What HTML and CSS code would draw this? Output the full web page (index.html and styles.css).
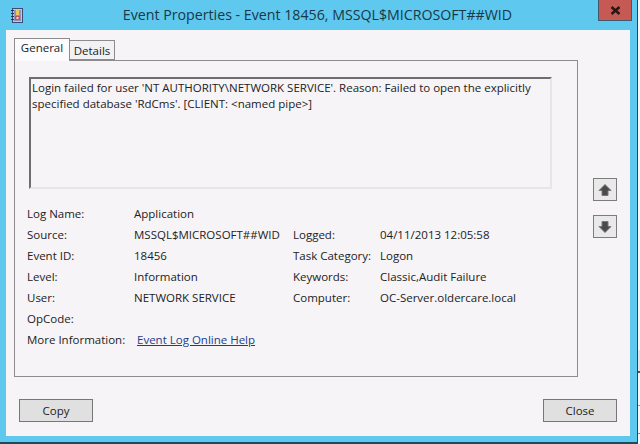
FILE: index.html
```html
<!DOCTYPE html>
<html lang="en">
<head>
<meta charset="utf-8">
<title>Event Properties</title>
<link rel="stylesheet" href="styles.css">
</head>
<body>
<div class="window">
  <header class="titlebar">
    <svg class="app-icon" width="14" height="17" viewBox="0 0 14 17">
      <rect x="2.500" y="1.500" width="10" height="14" fill="#c9c3dc" stroke="#3d4a78"/>
      <rect x="4" y="3" width="7" height="11" fill="#8f93b8"/>
      <rect x="6" y="3" width="3" height="5" fill="#e8c860"/>
      <rect x="5" y="9" width="5" height="4" fill="#c8505a"/>
      <rect x="6.500" y="10" width="2" height="2" fill="#efe0d8"/>
      <path d="M1 3.500h3M1 6.500h3M1 9.500h3M1 12.500h3" stroke="#2b3350"/>
    </svg>
    <h1 class="title">Event Properties - Event 18456, MSSQL$MICROSOFT##WID</h1>
    <div class="close"><svg width="11" height="9" viewBox="0 0 11 9"><path d="M1.500 1l8 7M9.500 1l-8 7" stroke="#2a1512" stroke-width="2.400"/></svg></div>
  </header>
  <main class="client">
    <div class="upper">
      <section class="tabs-area">
        <nav class="tabs">
          <div class="tab active">General</div>
          <div class="tab">Details</div>
        </nav>
        <div class="panel">
          <div class="message">Login failed for user 'NT AUTHORITY\NETWORK SERVICE'. Reason: Failed to open the explicitly specified database 'RdCms'. [CLIENT: &lt;named pipe&gt;]</div>
          <div class="props">
            <span>Log Name:</span><span class="wide">Application</span>
            <span>Source:</span><span>MSSQL$MICROSOFT##WID</span><span>Logged:</span><span>04/11/2013 12:05:58</span>
            <span>Event ID:</span><span>18456</span><span>Task Category:</span><span>Logon</span>
            <span>Level:</span><span>Information</span><span>Keywords:</span><span>Classic,Audit Failure</span>
            <span>User:</span><span>NETWORK SERVICE</span><span>Computer:</span><span>OC-Server.oldercare.local</span>
            <span>OpCode:</span><span class="wide"></span>
            <span>More Information:</span><a class="wide link" href="#">Event Log Online Help</a>
          </div>
        </div>
      </section>
      <aside class="arrows">
        <button class="arrow"><svg width="14" height="14" viewBox="0 0 14 14"><path d="M7 1.500L13 7.500H10V12.500H4V7.500H1Z" fill="#4a4a4c" stroke="#777" stroke-width="1"/></svg></button>
        <button class="arrow"><svg width="14" height="14" viewBox="0 0 14 14"><path d="M7 12.500L13 6.500H10V1.500H4V6.500H1Z" fill="#4a4a4c" stroke="#777" stroke-width="1"/></svg></button>
      </aside>
    </div>
    <footer class="actions">
      <button class="btn">Copy</button>
      <button class="btn">Close</button>
    </footer>
  </main>
</div>
<div class="backdrop"></div>
</body>
</html>
```
FILE: styles.css
```css
* { box-sizing: border-box; }
html, body { margin: 0; padding: 0; }
body { width: 640px; height: 444px; display: flex; background: #f4f8fa; overflow: hidden; font-family: "Open Sans", "Noto Sans", sans-serif; font-size: 11.5px; color: #222; }
.window { width: 638px; height: 444px; flex: none; background: #5fc8ee; display: flex; flex-direction: column; padding: 0 7px 6px 6px; border-right: 1px solid #1f4a5c; border-bottom: 2px solid #1f4a5c; }
.titlebar { height: 30px; flex: none; display: flex; align-items: center; position: relative; }
.app-icon { position: absolute; left: 4px; top: 7px; }
.title { margin: 0 0 2px; width: 100%; text-align: center; font-size: 14.2px; font-weight: 400; color: #17384a; padding-right: 1px; }
.close { position: absolute; right: -2px; top: 0; width: 34px; height: 21px; background: #c55a55; border: 1px solid #3f5a6a; border-top: 0; display: flex; align-items: center; justify-content: center; }
.client { flex: 1; background: #f6f4f7; display: flex; flex-direction: column; padding: 8px 13px 0 8px; }
.upper { display: flex; flex: none; }
.tabs-area { width: 564px; }
.tabs { display: flex; align-items: flex-end; height: 23px; position: relative; z-index: 1; }
.tab { width: 45px; height: 20px; border: 1px solid #8c8c8c; border-left: 0; background: #f2f1f3; text-align: center; line-height: 19px; margin-bottom: 1px; }
.tab.active { width: 56px; height: 23px; border-left: 1px solid #8c8c8c; border-bottom: 0; background: #fcfbfd; line-height: 18px; margin-bottom: 0; }
.panel { height: 317px; margin-top: -1px; border: 1px solid #8c8c8c; background: #f6f4f7; padding: 16px 25px 0 14px; }
.message { height: 112px; border: 2px solid #e6e5e8; border-top-color: #6e6e6e; border-left-color: #6e6e6e; padding: 1px 0 0 1px; line-height: 16px; }
.props { display: grid; grid-template-columns: 107px 159px 87px 1fr; grid-auto-rows: 21px; margin-top: 14px; margin-left: -2px; line-height: 21px; }
.wide { grid-column: 2 / 5; }
.link { color: #1a3e8c; text-decoration: underline; margin-left: 3px; }
.arrows { display: flex; flex-direction: column; gap: 14px; padding: 140px 0 0 15px; }
.arrow { width: 24px; height: 23px; padding: 0; background: #e9e9ea; border: 1px solid #7c7c7c; display: flex; align-items: center; justify-content: center; }
.actions { display: flex; justify-content: space-between; margin-top: 22px; padding: 0 0 0 5px; }
.btn { width: 74px; height: 23px; padding: 0; background: #e0e0e0; border: 1px solid #777; font: inherit; color: #222; }
.backdrop { width: 2px; height: 444px; flex: none; background: linear-gradient(#f4f8fa 0 350px, #dfe6ea 350px 371px, #555 371px 373px, #f4f8fa 373px 405px, #999 405px 406px, #f4f8fa 406px 433px, #888 433px 434px, #f4f8fa 434px); }
```
